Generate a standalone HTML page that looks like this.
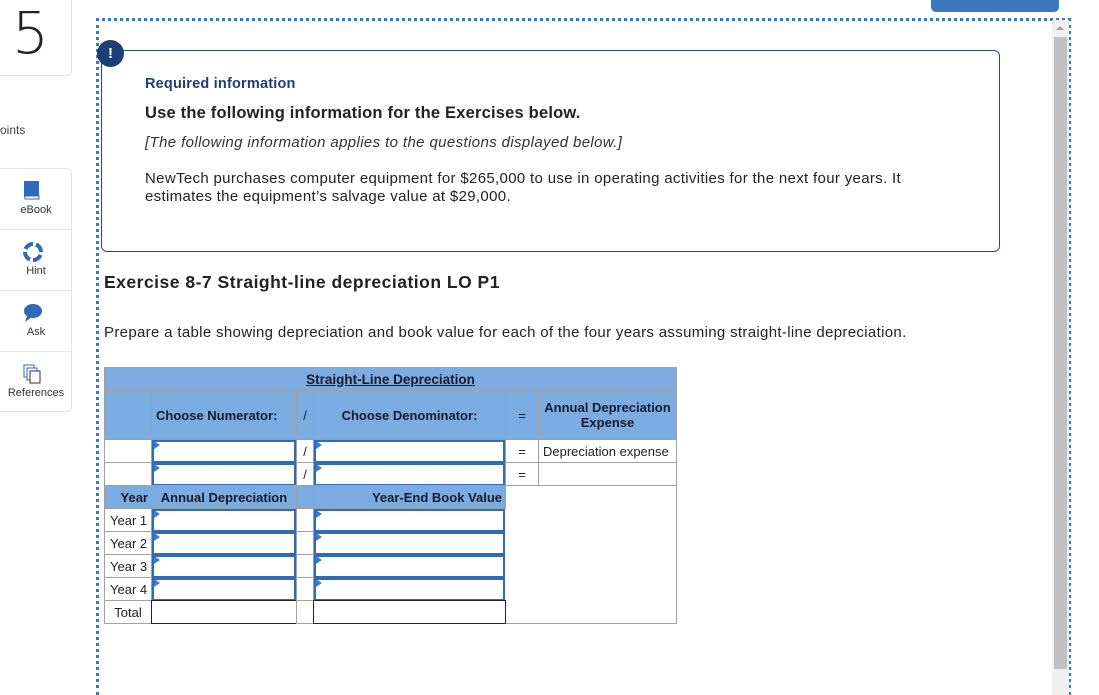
<!DOCTYPE html>
<html style="overflow:hidden;height:695px"><head><meta charset="utf-8">
<style>
*{margin:0;padding:0;box-sizing:border-box}
body{width:1099px;height:695px;overflow:hidden;background:#fff;font-family:"Liberation Sans",Arial,sans-serif;position:relative;color:#222}
.a{position:absolute}
.c{position:absolute;border:1px solid #a0a0a0;font-size:13px;display:flex;align-items:center;font-family:"Liberation Sans",Arial,sans-serif;color:#222}
.b{background:#7aace2;font-weight:bold;color:#1a1a2a}
.in{position:absolute;background:#fff;border:2px solid #2e6cb8}
.in:before{content:"";position:absolute;left:0;top:0;border-left:6px solid #3a7bd0;border-bottom:4px solid transparent;border-top:4px solid transparent;top:-1px}
.side{color:#333;font-size:11px;text-align:center;position:absolute;left:0;width:72px}
</style></head><body>

<!-- sidebar -->
<div class="a" style="left:-10px;top:-10px;width:82px;height:86px;border:1px solid #e3e3e3;border-radius:6px"></div>
<div class="a" style="left:12px;top:0px;font-size:58px;line-height:66px;color:#222;font-family:'DejaVu Sans',sans-serif;font-weight:300">5</div>
<div class="a" style="left:0;top:123px;font-size:12px;color:#444">oints</div>
<div class="a" style="left:-10px;top:168px;width:82px;height:244px;border:1px solid #e3e3e3;border-radius:6px"></div>
<div class="a" style="left:0;top:229px;width:72px;border-top:1px solid #e3e3e3"></div>
<div class="a" style="left:0;top:290px;width:72px;border-top:1px solid #e3e3e3"></div>
<div class="a" style="left:0;top:351px;width:72px;border-top:1px solid #e3e3e3"></div>
<svg class="a" style="left:23px;top:181px" width="18" height="20"><rect x="1" y="0" width="15" height="16" fill="#2f6ab8"/><rect x="2" y="15" width="14" height="3" fill="#fff" stroke="#2f6ab8" stroke-width="1"/></svg>
<div class="side" style="top:204px">eBook</div>
<svg class="a" style="left:23px;top:242px" width="20" height="20"><circle cx="10" cy="10" r="8" fill="none" stroke="#2f6ab8" stroke-width="4"/><circle cx="10" cy="10" r="8" fill="none" stroke="#fff" stroke-width="4" stroke-dasharray="3 9.5"/><circle cx="10" cy="10" r="3" fill="#fff"/></svg>
<div class="side" style="top:265px">Hint</div>
<svg class="a" style="left:23px;top:303px" width="20" height="20"><ellipse cx="10" cy="8" rx="9" ry="7" fill="#2f6ab8"/><path d="M4 13 L2 19 L9 14Z" fill="#2f6ab8"/></svg>
<div class="side" style="top:326px">Ask</div>
<svg class="a" style="left:23px;top:364px" width="20" height="20"><rect x="1" y="1" width="10" height="12" fill="#fff" stroke="#2f6ab8"/><rect x="4" y="4" width="10" height="12" fill="#fff" stroke="#2f6ab8"/><rect x="7" y="7" width="10" height="12" fill="#fff" stroke="#333"/></svg>
<div class="side" style="top:387px">References</div>

<!-- top button -->
<div class="a" style="left:931px;top:-8px;width:128px;height:20px;background:#3a77bd;border-radius:5px"></div>

<!-- dotted frame -->
<div class="a" style="left:96px;top:18px;width:975px;height:677px;border:3px dotted #3a77c4;border-bottom:none"></div>
<div class="a" style="left:1052px;top:20px;width:17px;height:675px;background:#f0f0f0"></div>
<div class="a" style="left:1054px;top:37px;width:13px;height:632px;background:#c1c1c1"></div>
<div class="a" style="left:1056px;top:26px;width:0;height:0;border-left:4px solid transparent;border-right:4px solid transparent;border-bottom:4px solid #a0a0a0"></div>

<!-- info box -->
<div class="a" style="left:101px;top:50px;width:899px;height:202px;border:1.5px solid #1f4a82;border-radius:6px"></div>
<div class="a" style="left:97px;top:40px;width:27px;height:27px;border-radius:50%;background:#1c3f75;color:#fff;font-weight:bold;font-size:15px;text-align:center;line-height:27px">!</div>
<div class="a" style="left:145px;top:76px;font-size:14.5px;font-weight:bold;color:#1c3f75;letter-spacing:0.2px">Required information</div>
<div class="a" style="left:145px;top:104px;font-size:16.5px;font-weight:bold;color:#222;letter-spacing:0.2px">Use the following information for the Exercises below.</div>
<div class="a" style="left:145px;top:134px;font-size:15px;font-style:italic;color:#333;letter-spacing:0.38px">[The following information applies to the questions displayed below.]</div>
<div class="a" style="left:145px;top:170px;font-size:15px;line-height:18px;color:#222;width:850px;letter-spacing:0.33px">NewTech purchases computer equipment for $265,000 to use in operating activities for the next four years. It<br>estimates the equipment’s salvage value at $29,000.</div>

<div class="a" style="left:104px;top:272px;font-size:17.5px;font-weight:bold;color:#222;letter-spacing:0.5px">Exercise 8-7 Straight-line depreciation LO P1</div>
<div class="a" style="left:104px;top:324px;font-size:15px;color:#222;letter-spacing:0.33px">Prepare a table showing depreciation and book value for each of the four years assuming straight-line depreciation.</div>

<!-- table -->
<div class="c b" style="left:104px;top:367px;width:573px;height:24px;justify-content:center"><u style="font-size:13.5px">Straight-Line Depreciation</u></div>
<div class="c b" style="left:104px;top:390px;width:48px;height:50px"></div>
<div class="c b" style="left:151px;top:390px;width:146px;height:50px;padding-left:4px">Choose Numerator:</div>
<div class="c b" style="left:296px;top:390px;width:18px;height:50px;justify-content:center;font-weight:normal">/</div>
<div class="c b" style="left:313px;top:390px;width:193px;height:50px;justify-content:center">Choose Denominator:</div>
<div class="c b" style="left:505px;top:390px;width:34px;height:50px;justify-content:center;font-weight:normal">=</div>
<div class="c b" style="left:538px;top:390px;width:139px;height:50px;justify-content:center;text-align:center;line-height:15px">Annual Depreciation<br>Expense</div>

<div class="c" style="left:104px;top:439px;width:48px;height:24px"></div>
<div class="in" style="left:152px;top:440px;width:144px;height:23px"></div>
<div class="c" style="left:296px;top:439px;width:18px;height:24px;justify-content:center">/</div>
<div class="in" style="left:314px;top:440px;width:191px;height:23px"></div>
<div class="c" style="left:505px;top:439px;width:34px;height:24px;justify-content:center">=</div>
<div class="c" style="left:538px;top:439px;width:139px;height:24px;padding-left:4px">Depreciation expense</div>

<div class="c" style="left:104px;top:462px;width:48px;height:24px"></div>
<div class="in" style="left:152px;top:463px;width:144px;height:23px"></div>
<div class="c" style="left:296px;top:462px;width:18px;height:24px;justify-content:center">/</div>
<div class="in" style="left:314px;top:463px;width:191px;height:23px"></div>
<div class="c" style="left:505px;top:462px;width:34px;height:24px;justify-content:center">=</div>
<div class="c" style="left:538px;top:462px;width:139px;height:24px"></div>

<div class="c" style="left:104px;top:485px;width:573px;height:139px"></div>
<div class="c b" style="left:104px;top:485px;width:48px;height:24px;justify-content:flex-end;padding-right:3px">Year</div>
<div class="c b" style="left:151px;top:485px;width:146px;height:24px;justify-content:center">Annual Depreciation</div>
<div class="c b" style="left:296px;top:485px;width:18px;height:24px"></div>
<div class="c b" style="left:313px;top:485px;width:193px;height:24px;justify-content:flex-end;padding-right:3px">Year-End Book Value</div>

<div class="c" style="left:104px;top:508px;width:48px;height:24px;padding-left:5px">Year 1</div>
<div class="in" style="left:152px;top:509px;width:144px;height:23px"></div>
<div class="c" style="left:296px;top:508px;width:18px;height:24px"></div>
<div class="in" style="left:314px;top:509px;width:191px;height:23px"></div>
<div class="c" style="left:104px;top:531px;width:48px;height:24px;padding-left:5px">Year 2</div>
<div class="in" style="left:152px;top:532px;width:144px;height:23px"></div>
<div class="c" style="left:296px;top:531px;width:18px;height:24px"></div>
<div class="in" style="left:314px;top:532px;width:191px;height:23px"></div>
<div class="c" style="left:104px;top:554px;width:48px;height:24px;padding-left:5px">Year 3</div>
<div class="in" style="left:152px;top:555px;width:144px;height:23px"></div>
<div class="c" style="left:296px;top:554px;width:18px;height:24px"></div>
<div class="in" style="left:314px;top:555px;width:191px;height:23px"></div>
<div class="c" style="left:104px;top:577px;width:48px;height:24px;padding-left:5px">Year 4</div>
<div class="in" style="left:152px;top:578px;width:144px;height:23px"></div>
<div class="c" style="left:296px;top:577px;width:18px;height:24px"></div>
<div class="in" style="left:314px;top:578px;width:191px;height:23px"></div>
<div class="c" style="left:104px;top:600px;width:48px;height:24px;justify-content:center">Total</div>
<div class="c" style="left:151px;top:600px;width:146px;height:24px;border-color:#222"></div>
<div class="c" style="left:296px;top:600px;width:18px;height:24px"></div>
<div class="c" style="left:313px;top:600px;width:193px;height:24px;border-color:#222"></div>
</body></html>
